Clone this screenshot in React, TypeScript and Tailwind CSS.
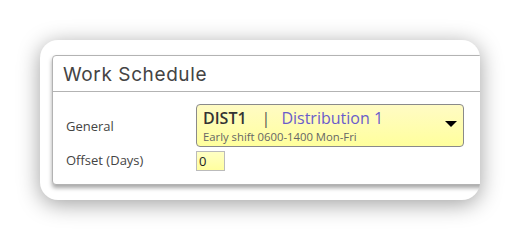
// Work schedule panel
const FONT = { fontFamily: '"Open Sans", "Liberation Sans", sans-serif' };

export default function App() {
  return (
    <main className="w-[520px] h-[241px] bg-white pt-[40px] pl-[40px]" style={FONT}>
      <div className="w-[440px] h-[160px] bg-white rounded-[18px] overflow-hidden pl-[12px] pt-[15px] shadow-[0_4px_22px_rgba(0,0,0,0.38)]">
        <section className="w-[440px] h-[130px] bg-white border border-[#b3b3b3] rounded-[4px] shadow-[0_3px_4px_rgba(0,0,0,0.35)]">
          <header className="h-[36px] border-b border-[#b3b3b3] pl-[10px] flex items-center">
            <h2 className="text-[19px] text-[#444] tracking-[0.6px] leading-none pt-[1px]" style={{ fontFamily: 'Inter, "Open Sans", sans-serif' }}>
              Work Schedule
            </h2>
          </header>

          <div className="pl-[13px] pt-[12px]">
            {/* General */}
            <div className="flex items-center">
              <label className="w-[130px] text-[13px] text-[#444] pt-[2px]">General</label>
              <button className="w-[268px] h-[43px] rounded-[4px] border border-[#8a8a8a] bg-gradient-to-b from-[#fffbc4] to-[#ffff9c] flex items-center pl-[6px] pr-[6px] text-left">
                <div className="flex-1">
                  <div className="flex items-baseline text-[16px] leading-[22px]">
                    <span className="font-semibold text-[#333]">DIST1</span>
                    <span className="text-[#555] pl-[15px] pr-[11px]">|</span>
                    <span className="text-[#6a5ccb]">Distribution 1</span>
                  </div>
                  <div className="text-[11.3px] text-[#666] leading-[16px]">Early shift 0600-1400 Mon-Fri</div>
                </div>
                <svg width="12" height="7" viewBox="0 0 12 7" className="mt-[-2px]">
                  <path d="M0 0 L12 0 L6 6 Z" fill="#000" />
                </svg>
              </button>
            </div>

            {/* Offset */}
            <div className="flex items-center mt-[4px]">
              <label className="w-[130px] text-[13px] text-[#444]">Offset (Days)</label>
              <div className="w-[29px] h-[20px] border border-[#bbb] bg-gradient-to-b from-[#ffffc4] to-[#ffff9e] text-[13px] text-[#222] leading-[18px] pl-[2px]">
                0
              </div>
            </div>
          </div>
        </section>
      </div>
    </main>
  );
}
